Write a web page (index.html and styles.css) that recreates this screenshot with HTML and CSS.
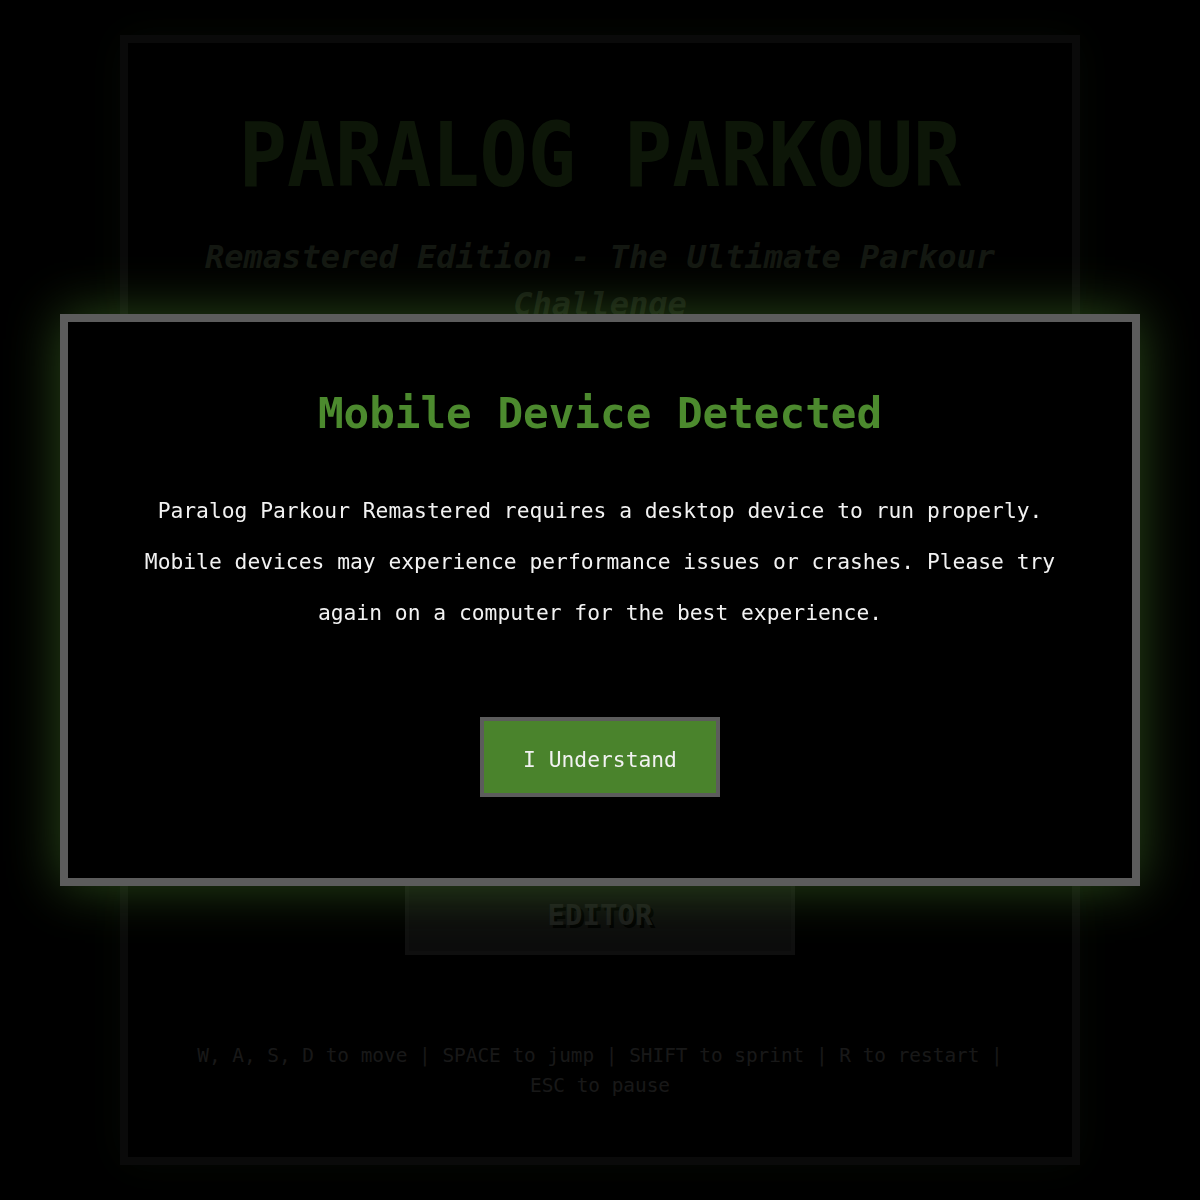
FILE: index.html
```html
<!DOCTYPE html>
<html lang="en">
<head>
<meta charset="utf-8">
<title>Paralog Parkour Remastered</title>
<link rel="stylesheet" href="styles.css">
</head>
<body>
<main class="menu">
  <h1 class="menu-title">PARALOG PARKOUR</h1>
  <p class="menu-subtitle">Remastered Edition - The Ultimate Parkour Challenge</p>
  <nav class="menu-buttons">
    <button class="menu-btn">PLAY</button>
    <button class="menu-btn">LEVELS</button>
    <button class="menu-btn">TUTORIAL</button>
    <button class="menu-btn">SETTINGS</button>
    <button class="menu-btn menu-btn-big">EDITOR</button>
  </nav>
  <p class="controls">W, A, S, D to move | SPACE to jump | SHIFT to sprint | R to restart | ESC to pause</p>
</main>

<div class="overlay">
  <section class="modal">
    <h2 class="modal-title">Mobile Device Detected</h2>
    <p class="modal-text">Paralog Parkour Remastered requires a desktop device to run properly. Mobile devices may experience performance issues or crashes. Please try again on a computer for the best experience.</p>
    <button class="modal-btn">I Understand</button>
  </section>
</div>
</body>
</html>
```

FILE: styles.css
```css
* { box-sizing: border-box; }

html, body {
  margin: 0;
  padding: 0;
  background: #000;
  height: 1200px;
  overflow: hidden;
  font-family: "DejaVu Sans Mono", "Liberation Mono", monospace;
}

.menu {
  width: 960px;
  height: 1130px;
  margin: 35px auto 0;
  border: 8px solid #4a4a4a;
  background: #000;
  box-shadow: 0 0 40px rgba(74, 132, 44, 0.45);
  padding: 65px 40px 56px;
  display: flex;
  flex-direction: column;
  align-items: center;
  text-align: center;
}

.menu-title {
  margin: 0;
  font-size: 80px;
  line-height: 96px;
  font-weight: bold;
  color: #5a9a3a;
  transform: scaleY(1.12);
}

.menu-subtitle {
  margin: 30px 0 0;
  font-size: 32px;
  line-height: 47px;
  font-style: italic;
  font-weight: bold;
  color: #8aa07a;
}

.menu-buttons {
  margin-top: 92px;
  display: flex;
  flex-direction: column;
  gap: 33.75px;
}

.menu-btn {
  width: 390px;
  height: 80px;
  background: #555;
  border: 4px solid #6a6a6a;
  color: #bbb;
  font-family: inherit;
  font-size: 24px;
  font-weight: bold;
}

.menu-btn-big {
  font-size: 29px;
  text-shadow: 3px 3px 0 #000;
}

.controls {
  margin: 86px 0 0;
  max-width: 820px;
  font-size: 19.4px;
  line-height: 30px;
  color: #aaa;
}

.overlay {
  position: fixed;
  inset: 0;
  background: rgba(0, 0, 0, 0.86);
  display: flex;
  align-items: center;
  justify-content: center;
}

.modal {
  width: 1080px;
  height: 572px;
  background: #000;
  border: 8px solid #5c5c5c;
  box-shadow: 0 0 50px rgba(74, 132, 44, 0.55);
  padding: 66px 48px 80px;
  display: flex;
  flex-direction: column;
  align-items: center;
  text-align: center;
}

.modal-title {
  margin: 0;
  font-size: 42.6px;
  line-height: 50px;
  font-weight: bold;
  color: #4c8a2e;
}

.modal-text {
  margin: 47px 0 0;
  font-size: 21.3px;
  line-height: 51px;
  color: #f2f2f2;
}

.modal-btn {
  margin-top: 79px;
  width: 240px;
  height: 80px;
  background: #4a832c;
  border: 4px solid #5c5c5c;
  color: #f2f2f2;
  font-family: inherit;
  font-size: 21.3px;
  padding: 4px 0 0;
}
```
